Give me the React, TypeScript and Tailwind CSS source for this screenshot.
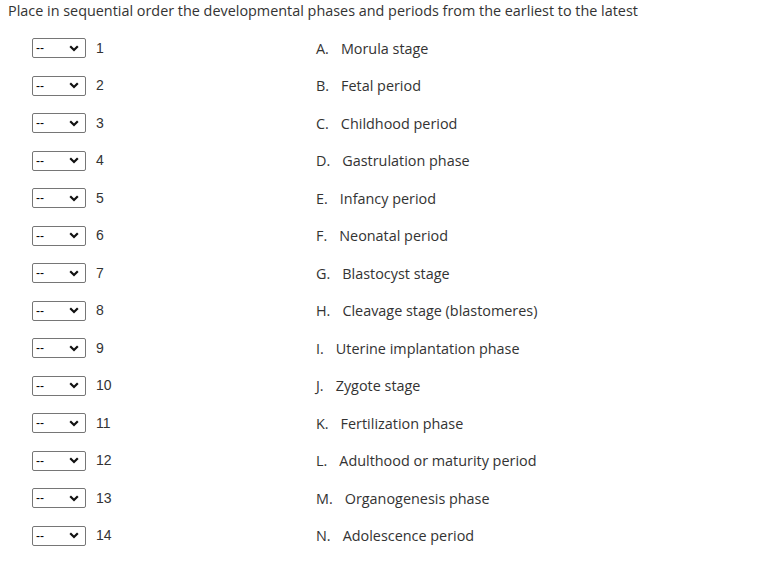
import React from "react";

const items = [
  ["A.", "Morula stage"],
  ["B.", "Fetal period"],
  ["C.", "Childhood period"],
  ["D.", "Gastrulation phase"],
  ["E.", "Infancy period"],
  ["F.", "Neonatal period"],
  ["G.", "Blastocyst stage"],
  ["H.", "Cleavage stage (blastomeres)"],
  ["I.", "Uterine implantation phase"],
  ["J.", "Zygote stage"],
  ["K.", "Fertilization phase"],
  ["L.", "Adulthood or maturity period"],
  ["M.", "Organogenesis phase"],
  ["N.", "Adolescence period"],
];

function FakeSelect() {
  return (
    <div className="w-[54px] h-[20px] border border-[#767676] rounded-[2px] bg-white flex items-center justify-between pl-[3px] pr-[6px]">
      <span className="text-[12px] leading-none text-black font-['Liberation_Sans',sans-serif]">--</span>
      <svg width="10" height="7" viewBox="0 0 10 7">
        <path d="M1.2 1.2 L5 5 L8.8 1.2" fill="none" stroke="#111" strokeWidth="2.2" />
      </svg>
    </div>
  );
}

export default function App() {
  return (
    <div className="w-[784px] h-[564px] bg-white text-[#333] font-['Open_Sans',sans-serif] text-[14.4px]">
      <div className="pl-[8px] pt-[1px] leading-[20px]">
        Place in sequential order the developmental phases and periods from the earliest to the latest
      </div>
      <div className="mt-[8.5px] flex flex-col">
        {items.map(([l, t], i) => (
          <div key={l} className="h-[37.5px] flex items-center">
            <div className="w-[316px] flex items-center pl-[32px]">
              <FakeSelect />
              <span className="ml-[10px] text-[14px] font-['Liberation_Sans',sans-serif] text-[#333]">{i + 1}</span>
            </div>
            <div className="flex items-center pt-[1px]">
              <span>{l}</span>
              <span className="ml-[12px]">{t}</span>
            </div>
          </div>
        ))}
      </div>
    </div>
  );
}
